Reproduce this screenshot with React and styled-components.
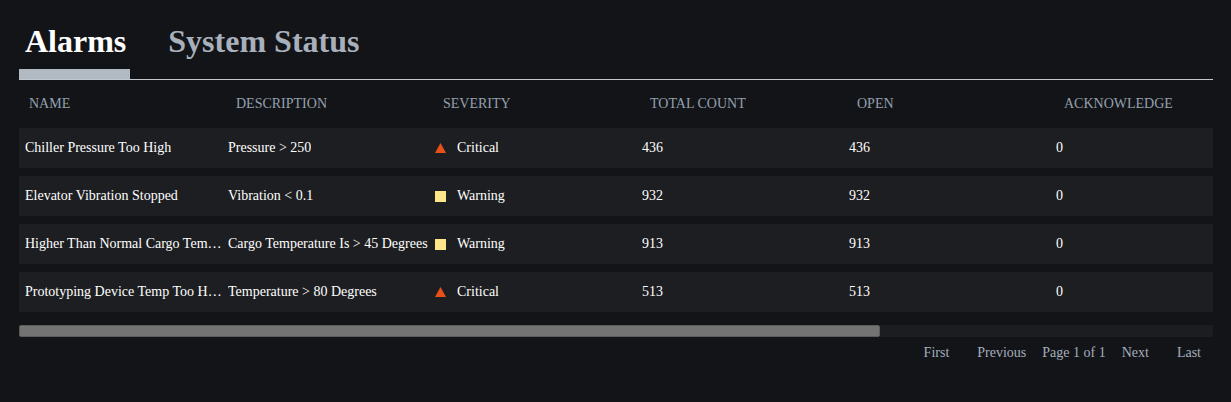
import React from "react";
import styled, { createGlobalStyle } from "styled-components";

const Global = createGlobalStyle`
  html, body {
    margin: 0;
    padding: 0;
    background: #131417;
  }
  body {
    font-family: "Liberation Serif", "Times New Roman", serif;
    color: #ffffff;
  }
`;

const VISIBLE_WIDTH = 1194;
const CONTENT_WIDTH = 1656;

const Page = styled.div`
  padding: 23px 18px 20px 19px;
  min-height: 402px;
  box-sizing: border-box;
  background: #131417;
`;

const TabList = styled.div`
  display: flex;
  align-items: flex-end;
  gap: 32px;
  border-bottom: 1px solid #c3c7cd;
`;

const Tab = styled.div`
  font-family: "Liberation Serif", "Times New Roman", serif;
  font-weight: 700;
  font-size: 32px;
  line-height: 36px;
  padding: 0 4px 10px 6px;
  color: ${(p) => (p.$active ? "#ffffff" : "#a8b0bc")};
  border-bottom: 10px solid ${(p) => (p.$active ? "#b1b9c3" : "transparent")};
  cursor: pointer;
`;

const ScrollArea = styled.div`
  overflow: hidden;
`;

const Table = styled.div`
  width: ${CONTENT_WIDTH}px;
  padding-bottom: 13px;
`;

const HeaderRow = styled.div`
  display: grid;
  grid-template-columns: repeat(8, 207px);
  height: 48px;
  align-items: center;
`;

const HeaderCell = styled.div`
  padding-left: 10px;
  font-size: 14px;
  text-transform: uppercase;
  color: #93a1b1;
  white-space: nowrap;
`;

const Body = styled.div`
  display: flex;
  flex-direction: column;
  gap: 8px;
`;

const Row = styled.div`
  display: grid;
  grid-template-columns: repeat(8, 207px);
  height: 40px;
  align-items: center;
  background: #1d1e21;
`;

const Cell = styled.div`
  padding: 0 2px 0 ${(p) => (p.$first ? "6px" : "2px")};
  font-size: 14px;
  color: #ffffff;
  white-space: nowrap;
  overflow: hidden;
  display: flex;
  align-items: center;
  min-width: 0;
`;

const CellText = styled.span`
  overflow: hidden;
  text-overflow: ellipsis;
  white-space: nowrap;
`;

const SeverityIcon = styled.span`
  width: 11px;
  height: 11px;
  margin-right: 11px;
  flex: none;
  display: inline-flex;
  align-items: center;
  justify-content: center;
`;

const Square = styled.span`
  width: 11px;
  height: 11px;
  background: #fde68a;
`;

const ScrollTrack = styled.div`
  height: 12px;
  background: #1c1d20;
  display: flex;
`;

const ScrollThumb = styled.div`
  height: 100%;
  box-sizing: border-box;
  background: #737373;
  border: 1px solid #5c5c5c;
  border-radius: 2px;
`;

const Pagination = styled.div`
  display: flex;
  justify-content: flex-end;
  align-items: center;
  gap: 4px;
  margin-top: 8px;
  font-size: 14px;
  line-height: 16px;
  color: #a3afbd;
`;

const PageButton = styled.span`
  padding: 0 12px;
  cursor: pointer;
`;

const PageLabel = styled.span`
  padding: 0;
`;

const Triangle = () => (
  <svg width="11" height="10" viewBox="0 0 11 10">
    <polygon points="5.5,0 11,10 0,10" fill="#e8501a" />
  </svg>
);

const columns = ["Name", "Description", "Severity", "Total Count", "Open", "Acknowledge", "", ""];

const rows = [
  { name: "Chiller Pressure Too High", desc: "Pressure > 250", sev: "Critical", total: 436, open: 436, ack: 0 },
  { name: "Elevator Vibration Stopped", desc: "Vibration < 0.1", sev: "Warning", total: 932, open: 932, ack: 0 },
  { name: "Higher Than Normal Cargo Temperature", desc: "Cargo Temperature Is > 45 Degrees", sev: "Warning", total: 913, open: 913, ack: 0 },
  { name: "Prototyping Device Temp Too High", desc: "Temperature > 80 Degrees", sev: "Critical", total: 513, open: 513, ack: 0 },
];

export default function App() {
  const thumbWidth = `${(VISIBLE_WIDTH / CONTENT_WIDTH) * 100}%`;
  return (
    <>
      <Global />
      <Page>
        <TabList>
          <Tab $active>Alarms</Tab>
          <Tab>System Status</Tab>
        </TabList>
        <ScrollArea>
          <Table>
            <HeaderRow>
              {columns.map((c, i) => (
                <HeaderCell key={i}>{c}</HeaderCell>
              ))}
            </HeaderRow>
            <Body>
              {rows.map((r) => (
                <Row key={r.name}>
                  <Cell $first>
                    <CellText>{r.name}</CellText>
                  </Cell>
                  <Cell>
                    <CellText>{r.desc}</CellText>
                  </Cell>
                  <Cell>
                    <SeverityIcon>{r.sev === "Critical" ? <Triangle /> : <Square />}</SeverityIcon>
                    <CellText>{r.sev}</CellText>
                  </Cell>
                  <Cell>{r.total}</Cell>
                  <Cell>{r.open}</Cell>
                  <Cell>{r.ack}</Cell>
                  <Cell />
                  <Cell />
                </Row>
              ))}
            </Body>
          </Table>
        </ScrollArea>
        <ScrollTrack>
          <ScrollThumb style={{ width: thumbWidth }} />
        </ScrollTrack>
        <Pagination>
          <PageButton>First</PageButton>
          <PageButton>Previous</PageButton>
          <PageLabel>Page 1 of 1</PageLabel>
          <PageButton>Next</PageButton>
          <PageButton>Last</PageButton>
        </Pagination>
      </Page>
    </>
  );
}
